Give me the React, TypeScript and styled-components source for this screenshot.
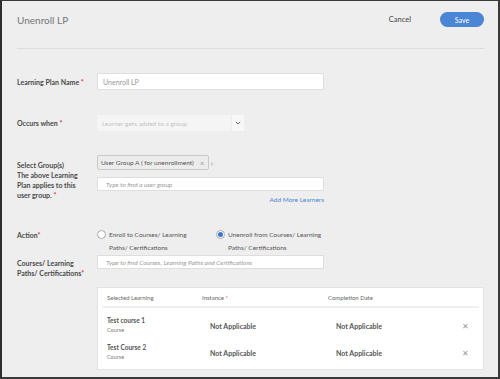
import React from "react";
import styled, { createGlobalStyle } from "styled-components";

const GlobalStyle = createGlobalStyle`
  html, body { margin: 0; padding: 0; background: #eeeeee; }
  * { box-sizing: border-box; }
`;

const Frame = styled.div`
  width: 500px;
  height: 379px;
  overflow: hidden;
  background: #eeeeee;
  border-top: 1px solid #3a3a3a;
  border-left: 2px solid #2e2e2e;
  border-right: 2px solid #3a3a3a;
  border-bottom: 2px solid #3a3a3a;
  padding: 0 14px 0 15px;
  font-family: Lato, "Open Sans", sans-serif;
  color: #444;
`;

const Header = styled.div`
  display: flex;
  align-items: center;
  height: 48px;
  padding-top: 1px;
  padding-bottom: 11px;
  border-bottom: 1px solid #dcdcdc;
`;

const Title = styled.h1`
  flex: 1;
  margin: 0;
  font-size: 10px;
  font-weight: 400;
  color: #777;
`;

const CancelButton = styled.button`
  border: none;
  background: none;
  font-family: inherit;
  font-size: 7.5px;
  color: #444;
  padding: 0;
  margin-right: 29px;
`;

const SaveButton = styled.button`
  width: 44px;
  height: 15px;
  border: none;
  border-radius: 8px;
  background: #4a86d4;
  color: #fff;
  font-family: inherit;
  font-size: 7px;
  padding: 0;
`;

const Row = styled.div<{ $top: number; $align?: string }>`
  display: flex;
  align-items: ${(p) => p.$align || "center"};
  margin-top: ${(p) => p.$top}px;
`;

const Label = styled.div<{ $offset?: number }>`
  width: 80px;
  flex-shrink: 0;
  padding-right: 9px;
  margin-top: ${(p) => p.$offset || 0}px;
  font-size: 7px;
  font-weight: 700;
  line-height: 10px;
  color: #4a4a4a;
`;

const Req = styled.span`
  color: #e0322f;
`;

const Field = styled.div`
  display: flex;
  flex-direction: column;
  width: 227px;
`;

const TextInput = styled.div<{ $italic?: boolean; $tall?: boolean }>`
  height: ${(p) => (p.$tall ? 17 : 14)}px;
  background: #fff;
  border: 1px solid #dedede;
  padding: 0 ${(p) => (p.$tall ? 5 : 8)}px;
  display: flex;
  align-items: center;
  font-size: ${(p) => (p.$tall ? 7 : 6.5)}px;
  color: #999;
  white-space: nowrap;
  font-style: ${(p) => (p.$italic ? "italic" : "normal")};
`;

const Select = styled.div`
  display: flex;
  width: 147px;
  height: 16px;
`;

const SelectValue = styled.div`
  flex: 1;
  background: #f5f5f5;
  display: flex;
  align-items: center;
  padding: 0 5px;
  font-size: 6.5px;
  color: #c4c4c4;
`;

const SelectArrow = styled.div`
  width: 12px;
  margin-left: 1px;
  background: #f7f7f7;
  display: flex;
  align-items: center;
  justify-content: center;
`;

const ChipRow = styled.div`
  display: flex;
  align-items: center;
  margin-bottom: 7px;
`;

const Chip = styled.div`
  display: flex;
  align-items: center;
  gap: 6px;
  height: 15px;
  padding: 0 4px 0 3px;
  border: 1px solid #c9c9c9;
  border-radius: 2px;
  background: #ececec;
  font-size: 6.5px;
  color: #555;
  white-space: nowrap;
`;

const ChipClose = styled.span`
  color: #9a9a9a;
  font-size: 8px;
`;

const ChipCaret = styled.span`
  width: 0;
  height: 0;
  border-top: 2px solid transparent;
  border-bottom: 2px solid transparent;
  border-left: 3px solid #cfcfcf;
  margin-left: 2px;
  margin-top: 3px;
`;

const LinkText = styled.div`
  align-self: flex-end;
  margin-top: 5px;
  font-size: 6.5px;
  color: #4a86d4;
`;

const RadioGroup = styled.div`
  display: flex;
`;

const RadioOption = styled.label`
  display: flex;
  align-items: flex-start;
  width: 119px;
  font-size: 6.5px;
  line-height: 13px;
  color: #555;
`;

const RadioCircle = styled.span<{ $checked?: boolean }>`
  width: 9px;
  height: 9px;
  flex-shrink: 0;
  border-radius: 50%;
  border: 1px solid #aaa;
  background: #fff;
  margin: 2px 3px 0 0;
  display: flex;
  align-items: center;
  justify-content: center;
  &::after {
    content: "";
    width: 5px;
    height: 5px;
    border-radius: 50%;
    background: ${(p) => (p.$checked ? "#3577d4" : "transparent")};
  }
`;

const Card = styled.div`
  margin: 9px 0 0 80px;
  width: 387px;
  height: 83px;
  background: #fff;
  border: 1px solid #e3e3e3;
  padding: 0 4px;
`;

const Grid = styled.div`
  display: grid;
  grid-template-columns: 95px 126px 133px 1fr;
  align-items: center;
  padding-left: 5px;
`;

const HeadRow = styled(Grid)`
  height: 20px;
  border-bottom: 2px solid #f0f0f0;
  font-size: 6px;
  color: #666;
`;

const RowList = styled.div`
  padding-top: 4px;
`;

const BodyRow = styled(Grid)`
  height: 27px;
  font-size: 6.5px;
`;

const CourseName = styled.div`
  font-weight: 700;
  color: #555;
  line-height: 10px;
`;

const CourseType = styled.div`
  font-size: 5.5px;
  color: #777;
  line-height: 9px;
`;

const NA = styled.div`
  font-weight: 700;
  color: #555;
  font-size: 7px;
  padding-left: 8px;
`;

const Remove = styled.div`
  color: #999;
  font-size: 8px;
  text-align: right;
  padding-right: 10px;
`;

const rows = [{ name: "Test course 1" }, { name: "Test Course 2" }];

export default function App() {
  return (
    <Frame>
      <GlobalStyle />
      <Header>
        <Title>Unenroll LP</Title>
        <CancelButton>Cancel</CancelButton>
        <SaveButton>Save</SaveButton>
      </Header>

      <Row $top={24}>
        <Label>
          Learning Plan Name <Req>*</Req>
        </Label>
        <Field>
          <TextInput $tall>Unenroll LP</TextInput>
        </Field>
      </Row>

      <Row $top={25}>
        <Label>
          Occurs when <Req>*</Req>
        </Label>
        <Select>
          <SelectValue>Learner gets added to a group</SelectValue>
          <SelectArrow>
            <svg width="6" height="4" viewBox="0 0 6 4">
              <path d="M0.8 0.8 L3 3 L5.2 0.8" fill="none" stroke="#666" strokeWidth="1" />
            </svg>
          </SelectArrow>
        </Select>
      </Row>

      <Row $top={24} $align="flex-start">
        <Label $offset={5}>
          Select Group(s)
          <br />
          The above Learning Plan applies to this user group. <Req>*</Req>
        </Label>
        <Field>
          <ChipRow>
            <Chip>
              User Group A ( for unenrollment)
              <ChipClose>×</ChipClose>
            </Chip>
            <ChipCaret />
          </ChipRow>
          <TextInput $italic>Type to find a user group</TextInput>
          <LinkText>Add More Learners</LinkText>
        </Field>
      </Row>

      <Row $top={25} $align="flex-start">
        <Label $offset={2}>
          Action<Req>*</Req>
        </Label>
        <RadioGroup>
          <RadioOption>
            <RadioCircle />
            <span>
              Enroll to Courses/ Learning
              <br />
              Paths/ Certifications
            </span>
          </RadioOption>
          <RadioOption>
            <RadioCircle $checked />
            <span>
              Unenroll from Courses/ Learning
              <br />
              Paths/ Certifications
            </span>
          </RadioOption>
        </RadioGroup>
      </Row>

      <Row $top={1} $align="flex-start">
        <Label $offset={3}>
          Courses/ Learning Paths/ Certifications<Req>*</Req>
        </Label>
        <Field>
          <TextInput $italic>Type to find Courses, Learning Paths and Certifications</TextInput>
        </Field>
      </Row>

      <Card>
        <HeadRow>
          <div>Selected Learning</div>
          <div>
            Instance <Req>*</Req>
          </div>
          <div>Completion Date</div>
          <div />
        </HeadRow>
        <RowList>
          {rows.map((r) => (
            <BodyRow key={r.name}>
              <div>
                <CourseName>{r.name}</CourseName>
                <CourseType>Course</CourseType>
              </div>
              <NA>Not Applicable</NA>
              <NA>Not Applicable</NA>
              <Remove>✕</Remove>
            </BodyRow>
          ))}
        </RowList>
      </Card>
    </Frame>
  );
}
